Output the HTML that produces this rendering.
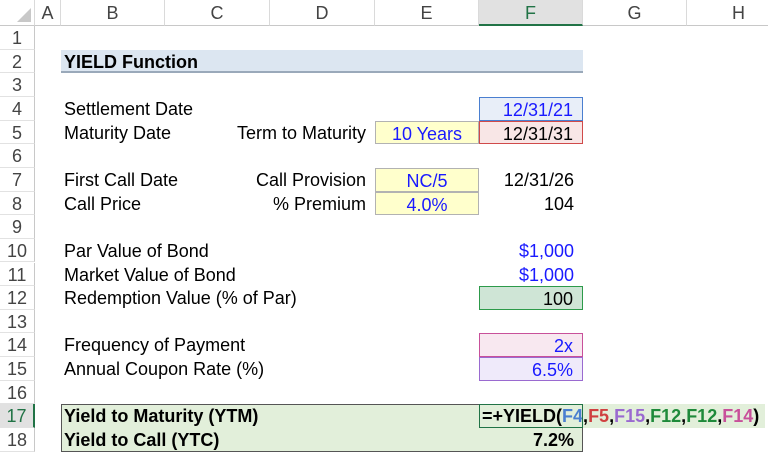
<!DOCTYPE html>
<html><head><meta charset="utf-8"><style>
*{margin:0;padding:0;box-sizing:border-box}
body{width:768px;height:457px;overflow:hidden;background:#fff;font-family:"Liberation Sans",Arial,sans-serif;font-size:18px;color:#000;position:relative}
.ch{position:absolute;top:0;height:26px;line-height:26px;text-align:center;color:#444;font-size:18px;border-right:1px solid #dadada;border-bottom:1px solid #c8c8c8;background:#fff}
.rh{position:absolute;left:0;width:35px;height:23.65px;line-height:25px;text-align:center;color:#444;font-size:18px;border-right:1px solid #c8c8c8;border-bottom:1px solid #e2e2e2}
.c{position:absolute;height:23.65px;line-height:25px;white-space:nowrap}
.r{text-align:right;padding-right:9px}
.ctr{text-align:center}
.blue{color:#1a1aff}
</style></head><body>
<div class="ch" style="left:0;width:35px"><svg width="35" height="26"><polygon points="31,8 31,22 17,22" fill="#c8c8c8"/></svg></div>
<div class="ch" style="left:35px;width:26px">A</div>
<div class="ch" style="left:61px;width:104px">B</div>
<div class="ch" style="left:165px;width:105px">C</div>
<div class="ch" style="left:270px;width:105px">D</div>
<div class="ch" style="left:375px;width:104px">E</div>
<div class="ch" style="left:479px;width:104px;background:#e1e1e1;color:#217346;border-bottom:2px solid #217346">F</div>
<div class="ch" style="left:583px;width:104px">G</div>
<div class="ch" style="left:687px;width:104px">H</div>

<div class="rh" style="top:26px">1</div>
<div class="rh" style="top:49.65px">2</div>
<div class="rh" style="top:73.3px">3</div>
<div class="rh" style="top:96.95px">4</div>
<div class="rh" style="top:120.6px">5</div>
<div class="rh" style="top:144.25px">6</div>
<div class="rh" style="top:167.9px">7</div>
<div class="rh" style="top:191.55px">8</div>
<div class="rh" style="top:215.2px">9</div>
<div class="rh" style="top:238.85px">10</div>
<div class="rh" style="top:262.5px">11</div>
<div class="rh" style="top:286.15px">12</div>
<div class="rh" style="top:309.8px">13</div>
<div class="rh" style="top:333.45px">14</div>
<div class="rh" style="top:357.1px">15</div>
<div class="rh" style="top:380.75px">16</div>
<div class="rh" style="top:404.4px;background:#e1e1e1;color:#217346;border-right:2px solid #217346">17</div>
<div class="rh" style="top:428.05px">18</div>

<div class="c" style="top:49.65px;left:61px;width:522px;background:#dce6f1;border-bottom:2px solid #9aa9ba;font-weight:bold;padding-left:3px">YIELD Function</div>

<div class="c" style="top:96.95px;left:64px">Settlement Date</div>
<div class="c r blue" style="top:96.95px;left:479px;width:104px;background:#e8eef8;border:1px solid #4a7fd0">12/31/21</div>

<div class="c" style="top:120.6px;left:64px">Maturity Date</div>
<div class="c r" style="top:120.6px;left:165px;width:210px">Term to Maturity</div>
<div class="c ctr blue" style="top:120.6px;left:375px;width:104px;background:#ffffcc;border:1px solid #b2b2b2">10 Years</div>
<div class="c r" style="top:120.6px;left:479px;width:104px;background:#f8e6e6;border:1px solid #d04a4a">12/31/31</div>

<div class="c" style="top:167.9px;left:64px">First Call Date</div>
<div class="c r" style="top:167.9px;left:165px;width:210px">Call Provision</div>
<div class="c ctr blue" style="top:167.9px;left:375px;width:104px;background:#ffffcc;border:1px solid #b2b2b2">NC/5</div>
<div class="c r" style="top:167.9px;left:479px;width:104px">12/31/26</div>

<div class="c" style="top:191.55px;left:64px">Call Price</div>
<div class="c r" style="top:191.55px;left:165px;width:210px">% Premium</div>
<div class="c ctr blue" style="top:191.55px;left:375px;width:104px;background:#ffffcc;border:1px solid #b2b2b2">4.0%</div>
<div class="c r" style="top:191.55px;left:479px;width:104px">104</div>

<div class="c" style="top:238.85px;left:64px">Par Value of Bond</div>
<div class="c r blue" style="top:238.85px;left:479px;width:104px">$1,000</div>
<div class="c" style="top:262.5px;left:64px">Market Value of Bond</div>
<div class="c r blue" style="top:262.5px;left:479px;width:104px">$1,000</div>
<div class="c" style="top:286.15px;left:64px">Redemption Value (% of Par)</div>
<div class="c r" style="top:286.15px;left:479px;width:104px;background:#cfe5d6;border:1.5px solid #2d9a4a">100</div>

<div class="c" style="top:333.45px;left:64px">Frequency of Payment</div>
<div class="c r blue" style="top:333.45px;left:479px;width:104px;background:#f8e8f0;border:1px solid #c8509a">2x</div>
<div class="c" style="top:357.1px;left:64px">Annual Coupon Rate (%)</div>
<div class="c r blue" style="top:357.1px;left:479px;width:104px;background:#efeafa;border:1px solid #9a6ad0">6.5%</div>

<div style="position:absolute;top:404.4px;left:61px;width:522px;height:47.3px;background:#e2efda;border:1px solid #555"></div>
<div class="c" style="top:404.4px;left:64px;font-weight:bold">Yield to Maturity (YTM)</div>
<div class="c" style="top:428.05px;left:64px;font-weight:bold">Yield to Call (YTC)</div>
<div style="position:absolute;top:404.4px;left:479px;width:104px;height:23.65px;border:1.5px solid #217346;z-index:2"></div>
<div class="c" style="top:404.4px;left:479px;width:286px;background:#e2efda;font-weight:bold;padding-left:3px">=+YIELD(<span style="color:#4a7fd0">F4</span>,<span style="color:#d04040">F5</span>,<span style="color:#9a6ad0">F15</span>,<span style="color:#1e8a3a">F12</span>,<span style="color:#1e8a3a">F12</span>,<span style="color:#c8509a">F14</span>)</div>
<div class="c r" style="top:428.05px;left:479px;width:104px;font-weight:bold">7.2%</div>
</body></html>
